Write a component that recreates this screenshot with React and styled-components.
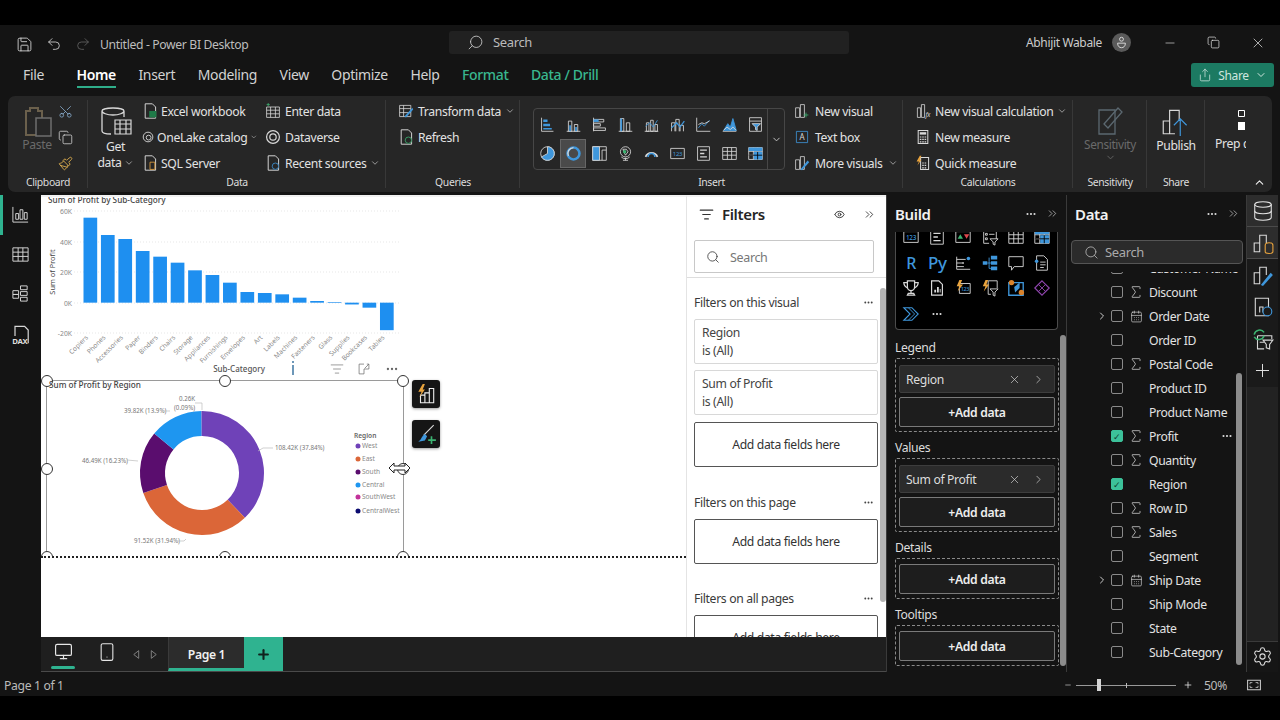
import React from "react";
import styled, { createGlobalStyle } from "styled-components";
import {
  Save, Undo2, Redo2, Search, Minus, X, Copy, Scissors, ChevronDown, ChevronUp, ChevronRight,
  ChevronsRight, Ellipsis, ListFilter, Eye, Sigma, CalendarDays, Plus, Settings, Database, Monitor,
  Smartphone, Share, Paintbrush,
} from "lucide-react";

const W = "#d8d8d8";
const B = "#3f97dc";
const O = "#e8a33d";
const FONT = `"Noto Sans", "Open Sans", sans-serif`;

const Global = createGlobalStyle`
  html, body { margin: 0; padding: 0; background: #000; overflow: hidden; }
  body { font-family: ${FONT}; }
  * { box-sizing: border-box; }
`;

/* shell */
const Screen = styled.div`
  width: 1280px;
  height: 720px;
  padding: 25px 0 24px;
  background: #000;
`;
const Frame = styled.div`
  height: 671px;
  display: flex;
  flex-direction: column;
  background: #141414;
  color: ${W};
  letter-spacing: -0.35px;
`;
const TitleBar = styled.div`
  height: 35px;
  flex: none;
  display: flex;
  align-items: center;
  padding: 3px 0 0 16px;
  position: relative;
`;
const TitleIcons = styled.div`
  display: flex;
  align-items: center;
  gap: 13px;
  width: 84px;
`;
const TitleText = styled.div`
  font-size: 12.2px;
  color: #bdbdbd;
  width: 349px;
  white-space: nowrap;
`;
const TopSearch = styled.div`
  width: 400px;
  height: 23px;
  display: flex;
  align-items: center;
  gap: 9px;
  padding-left: 18px;
  background: #212121;
  border-radius: 3px;
  font-size: 13px;
  color: #bbb;
  margin-top: -4px;
`;
const UserBox = styled.div`
  margin-left: 177px;
  width: 120px;
  display: flex;
  align-items: center;
  gap: 10px;
  font-size: 12px;
  color: #ccc;
  white-space: nowrap;
  margin-top: -4px;
`;
const Avatar = styled.div`
  width: 19px;
  height: 19px;
  border-radius: 50%;
  background: #5a5a5a;
  display: flex;
  align-items: center;
  justify-content: center;
  flex: none;
`;
const WindowButtons = styled.div`
  display: flex;
  align-items: center;
  gap: 30px;
  margin: -3px 0 0 17px;
`;
const MenuBar = styled.div`
  height: 36px;
  flex: none;
  display: flex;
  align-items: center;
  padding: 0 6px 7px 23px;
  gap: 22.5px;
`;
const MenuTab = styled.div`
  position: relative;
  font-size: 14px;
  font-weight: ${(p) => (p.$active ? 600 : p.$green ? 500 : 400)};
  color: ${(p) => (p.$green ? "#39b78f" : p.$active ? "#fff" : "#d2d2d2")};
  margin-right: ${(p) => p.$gapAfter || 0}px;
  white-space: nowrap;
  &::after {
    content: "";
    display: ${(p) => (p.$active ? "block" : "none")};
    position: absolute;
    left: 0;
    right: 0;
    bottom: -4px;
    height: 2px;
    background: #2fae8a;
  }
`;
const ShareButton = styled.div`
  margin-left: auto;
  width: 83px;
  height: 24px;
  display: flex;
  align-items: center;
  justify-content: center;
  gap: 6px;
  background: #1c7a62;
  border-radius: 3px;
  font-size: 12px;
  color: #cfe6df;
  margin-top: 1px;
`;

/* ribbon */
const Ribbon = styled.div`
  height: 96px;
  flex: none;
  margin: 0 8px 3px;
  display: flex;
  background: #262626;
  border-radius: 7px;
`;
const Group = styled.div`
  width: ${(p) => p.$w}px;
  flex: none;
  display: flex;
  flex-direction: column;
  padding-top: 2px;
  position: relative;
  &:not(:last-child)::after {
    content: "";
    position: absolute;
    right: 0;
    top: 4px;
    bottom: 4px;
    width: 1px;
    background: #383838;
  }
`;
const GroupBody = styled.div`
  height: 76px;
  display: flex;
  padding-left: ${(p) => p.$pad || 0}px;
  gap: ${(p) => p.$gap || 0}px;
`;
const GroupLabel = styled.div`
  font-size: 10.4px;
  text-align: center;
  color: #ddd;
  line-height: 14px;
  margin-top: 1px;
`;
const Column = styled.div`
  display: flex;
  flex-direction: column;
  width: ${(p) => (p.$w ? `${p.$w}px` : "auto")};
  flex: none;
`;
const Item = styled.div`
  height: 26px;
  flex: none;
  display: flex;
  align-items: center;
  gap: ${(p) => p.$gap || 3}px;
  font-size: 12.2px;
  color: #e2e2e2;
  white-space: nowrap;
`;
const BigButton = styled.div`
  width: ${(p) => p.$w || 40}px;
  flex: none;
  display: flex;
  flex-direction: column;
  align-items: center;
  padding-top: ${(p) => p.$top || 6}px;
  font-size: 12.2px;
  line-height: 16px;
  text-align: center;
  color: ${(p) => (p.$dim ? "#6a6a6a" : "#e2e2e2")};
  white-space: nowrap;
`;
const CaretLine = styled.span`
  display: flex;
  align-items: center;
  gap: 2px;
`;
const Gallery = styled.div`
  width: 252px;
  height: 62px;
  margin-top: 10px;
  flex: none;
  display: flex;
  border: 1px solid #474747;
  border-radius: 4px;
`;
const GalleryGrid = styled.div`
  width: 234px;
  display: grid;
  grid-template-columns: repeat(9, 26px);
  grid-auto-rows: 29px;
  padding-top: 1px;
  border-right: 1px solid #474747;
`;
const GalleryCell = styled.div`
  display: flex;
  align-items: center;
  justify-content: center;
  background: ${(p) => (p.$on ? "#4a4a4a" : "transparent")};
  border: 1px solid ${(p) => (p.$on ? "#666" : "transparent")};
`;
const GalleryMore = styled.div`
  flex: 1;
  display: flex;
  align-items: center;
  justify-content: center;
`;
const Collapse = styled.div`
  position: absolute;
  right: 6px;
  bottom: 3px;
  line-height: 0;
`;
const PrepClip = styled.div`
  width: 31px;
  overflow: hidden;
  margin-left: 10px;
  padding-top: 6px;
  font-size: 12.2px;
  line-height: 16px;
  color: #e2e2e2;
  white-space: nowrap;
  svg {
    display: block;
  }
`;

/* main */
const Main = styled.div`
  flex: 1;
  min-height: 0;
  display: flex;
`;
const LeftRail = styled.div`
  width: 41px;
  flex: none;
  display: flex;
  flex-direction: column;
  align-items: center;
`;
const RailButton = styled.div`
  width: 41px;
  height: ${(p) => p.$h || 39.5}px;
  display: flex;
  align-items: center;
  justify-content: center;
  color: #d0d0d0;
  border-left: 3px solid ${(p) => (p.$on ? "#2fb390" : "transparent")};
  padding-right: 3px;
`;
const Center = styled.div`
  width: 845px;
  flex: none;
  display: flex;
  flex-direction: column;
`;
const Workspace = styled.div`
  flex: 1;
  min-height: 0;
  display: flex;
  background: #fff;
`;
const CanvasArea = styled.div`
  width: 645px;
  flex: none;
  background: #fff;
  position: relative;
  overflow: hidden;
  border-top: 2px solid #f1f1f1;
`;
const PageSheet = styled.div`
  position: relative;
  height: 361px;
  overflow: hidden;
  border-bottom: 2px dotted #222;
`;
const ChartSvg = styled.svg`
  position: absolute;
  left: ${(p) => p.$x}px;
  top: ${(p) => p.$y}px;
  font-family: ${FONT};
  letter-spacing: 0;
`;
const VisualHeader = styled.div`
  position: absolute;
  left: 245px;
  top: 164px;
  width: 120px;
  height: 16px;
  display: flex;
  align-items: center;
  color: #666;
`;
const InfoMark = styled.div`
  width: 2px;
  height: 10px;
  background: #6d97b8;
  margin-right: 35px;
  position: relative;
  left: 6px;
  top: 1px;
  &::before {
    content: "";
    position: absolute;
    left: 0;
    top: -4px;
    width: 2px;
    height: 2px;
    background: #6d97b8;
  }
`;
const HeaderIcon = styled.div`
  width: 28px;
  display: flex;
  justify-content: center;
`;
const Selected = styled.div`
  position: absolute;
  left: 5px;
  top: 183px;
  width: 358px;
  height: 178px;
  border: 1.5px solid #9a9a9a;
`;
const Handle = styled.div`
  position: absolute;
  left: ${(p) => p.$x}%;
  top: ${(p) => p.$y}%;
  width: 12px;
  height: 12px;
  margin: -6px 0 0 -6px;
  border-radius: 50%;
  background: #fff;
  border: 1.5px solid #333;
`;
const FloatBar = styled.div`
  position: absolute;
  left: 371px;
  top: 183px;
  display: flex;
  flex-direction: column;
  gap: 12px;
`;
const FloatButton = styled.div`
  width: 28px;
  height: 28px;
  background: #151515;
  border-radius: 3px;
  display: flex;
  align-items: center;
  justify-content: center;
  box-shadow: 0 1px 3px rgba(0, 0, 0, 0.4);
`;

/* filters */
const FiltersPane = styled.div`
  width: 200px;
  flex: none;
  position: relative;
  overflow: hidden;
  background: #fff;
  border-left: 1px solid #e4e4e4;
  border-top: 2px solid #f1f1f1;
  color: #333;
`;
const FiltersHead = styled.div`
  height: 34px;
  display: flex;
  align-items: center;
  padding: 0 10px 0 12px;
  gap: 8px;
  font-size: 15px;
  font-weight: 600;
  color: #252525;
`;
const FiltersSearch = styled.div`
  margin: 9px 12px 0 7px;
  height: 33px;
  border: 1px solid #c8c8c8;
  border-radius: 2px;
  display: flex;
  align-items: center;
  gap: 10px;
  padding: 1px 0 0 11px;
  font-size: 12.5px;
  color: #777;
`;
const Rule = styled.div`
  height: 1px;
  margin-top: 4px;
  background: #dedede;
`;
const FilterSection = styled.div`
  padding: 0 8px 0 7px;
  margin-top: ${(p) => p.$top}px;
`;
const FilterTitle = styled.div`
  display: flex;
  justify-content: space-between;
  align-items: center;
  height: 18px;
  font-size: 12.2px;
  color: #3a3a3a;
  padding-right: 4px;
  margin-bottom: 8px;
`;
const FilterCard = styled.div`
  height: 45px;
  border: 1px solid #d8d8d8;
  border-radius: 2px;
  padding: 4px 7px;
  font-size: 12.2px;
  line-height: 18px;
  color: #444;
  margin-bottom: 6px;
`;
const AddBox = styled.div`
  height: 45px;
  border: 1px solid #555;
  border-radius: 2px;
  display: flex;
  align-items: center;
  justify-content: center;
  font-size: 12.2px;
  color: #333;
  ${FilterCard} + & {
    margin-top: 7px;
  }
`;
const PaneScroll = styled.div`
  position: absolute;
  right: 0;
  top: 91px;
  width: 6px;
  height: 314px;
  border-radius: 3px;
  background: #b4b4b4;
`;

/* tab strip */
const TabStrip = styled.div`
  height: 35px;
  flex: none;
  display: flex;
  background: #1f1f1f;
  border-bottom: 1px solid #4a4a4a;
`;
const ViewButton = styled.div`
  width: 44px;
  display: flex;
  justify-content: center;
  padding-top: 5px;
  position: relative;
  color: #e6e6e6;
  &::after {
    content: "";
    display: ${(p) => (p.$on ? "block" : "none")};
    position: absolute;
    left: 10px;
    right: 10px;
    top: 29px;
    height: 3px;
    border-radius: 2px;
    background: #2fb390;
  }
`;
const PagerArrows = styled.div`
  width: 35px;
  display: flex;
  align-items: center;
  justify-content: space-between;
  padding: 0 5px 0 2px;
`;
const PageTab = styled.div`
  margin-left: 4px;
  width: 76px;
  display: flex;
  align-items: center;
  justify-content: center;
  background: #2c2c2c;
  border-bottom: 3px solid #2fb390;
  font-size: 12.2px;
  font-weight: 600;
  color: #f0f0f0;
  padding-top: 3px;
  border-left: 1px solid #3a3a3a;
`;
const AddTab = styled.div`
  width: 39px;
  display: flex;
  align-items: center;
  justify-content: center;
  background: #2fb390;
`;

/* build + data */
const DarkPane = styled.div`
  width: ${(p) => p.$w}px;
  flex: none;
  position: relative;
  overflow: hidden;
  border-left: 1px solid #3a3a3a;
  background: #141414;
`;
const PaneHead = styled.div`
  height: 37px;
  display: flex;
  align-items: center;
  padding: 0 ${(p) => p.$right}px 0 8px;
  font-size: 15px;
  font-weight: 600;
  color: #f2f2f2;
`;
const PaneActions = styled.div`
  margin-left: auto;
  display: flex;
  align-items: center;
  gap: ${(p) => p.$gap || 9}px;
`;
const VizBox = styled.div`
  margin: 0 8px;
  width: 163px;
  height: 98px;
  background: #000;
  border: 1px solid #4c4c4c;
  border-top: 0;
  border-radius: 0 0 4px 4px;
  overflow: hidden;
  display: grid;
  grid-template-columns: repeat(6, 26.2px);
  grid-auto-rows: 25.7px;
  padding: 0 0 0 2px;
  align-content: start;
`;
const VizCell = styled.div`
  display: flex;
  align-items: center;
  justify-content: center;
  font-size: ${(p) => p.$size || 15}px;
  font-weight: 500;
  color: ${B};
  margin-top: -8px;
  height: 26px;
`;
const WellTitle = styled.div`
  font-size: 12.2px;
  line-height: 16px;
  color: #ddd;
  margin: ${(p) => p.$top}px 0 2px 8px;
`;
const Well = styled.div`
  margin: 0 8px;
  width: 164px;
  border: 1px dashed #8a8a8a;
  border-radius: 2px;
  padding: ${(p) => (p.$filled ? 6 : 5)}px 3px 4px;
  display: flex;
  flex-direction: column;
  gap: 4px;
`;
const FieldPill = styled.div`
  height: 28px;
  display: flex;
  align-items: center;
  background: #2b2b2b;
  border: 1px solid #3d3d3d;
  border-radius: 2px;
  padding-left: 6px;
  font-size: 12.2px;
  color: #ddd;
`;
const PillActions = styled.div`
  margin-left: auto;
  display: flex;
  align-items: center;
  height: 100%;
  gap: 11px;
  padding-right: 9px;
  line-height: 0;
`;
const AddData = styled.div`
  height: 30px;
  border: 1px solid #7a7a7a;
  border-radius: 2px;
  background: #1d1d1d;
  display: flex;
  align-items: center;
  justify-content: center;
  font-size: 12.2px;
  font-weight: 600;
  color: #eee;
`;
const DarkScroll = styled.div`
  position: absolute;
  right: ${(p) => p.$r}px;
  top: ${(p) => p.$t}px;
  width: 6px;
  height: ${(p) => p.$h}px;
  border-radius: 3px;
  background: #8c8c8c;
`;
const DataSearch = styled.div`
  margin: 8px 0 0 4px;
  width: 172px;
  height: 24px;
  display: flex;
  align-items: center;
  gap: 6px;
  padding-left: 12px;
  background: #2b2b2b;
  border: 1px solid #555;
  border-radius: 4px;
  font-size: 13px;
  color: #aaa;
`;
const FieldList = styled.div`
  height: 392px;
  margin-top: 8px;
  overflow: hidden;
`;
const FieldRows = styled.div`
  margin-top: -16px;
`;
const FieldRow = styled.div`
  height: 24px;
  display: flex;
  align-items: center;
  padding-left: 29px;
  font-size: 12.2px;
  color: #e2e2e2;
  white-space: nowrap;
`;
const Expander = styled.div`
  width: 15px;
  line-height: 0;
`;
const Check = styled.div`
  width: 12px;
  height: 12px;
  flex: none;
  border-radius: 2px;
  border: 1px solid ${(p) => (p.$on ? "#3cc19a" : "#8a8a8a")};
  background: ${(p) => (p.$on ? "#3cc19a" : "transparent")};
  display: flex;
  align-items: center;
  justify-content: center;
  color: #0f3f33;
  font-size: 9px;
  line-height: 1;
`;
const TypeIcon = styled.div`
  width: 26px;
  flex: none;
  display: flex;
  justify-content: center;
  line-height: 0;
`;
const RowDots = styled.div`
  margin-left: auto;
  padding-right: 13px;
  line-height: 0;
`;
const RightRail = styled.div`
  width: 32px;
  flex: none;
  display: flex;
  flex-direction: column;
  background: #222;
  border-left: 1px solid #3a3a3a;
`;
const RightButton = styled.div`
  height: 32px;
  display: flex;
  align-items: center;
  justify-content: center;
  color: #e6e6e6;
  background: ${(p) => (p.$on ? "#2d2d2d" : "#1a1a1a")};
  border-bottom: 1px solid ${(p) => (p.$on ? "#4a4a4a" : "transparent")};
`;
const RailGear = styled.div`
  margin-top: auto;
  height: 31px;
  padding-bottom: 2px;
  display: flex;
  align-items: center;
  justify-content: center;
  color: #ddd;
  border-top: 1px solid #3a3a3a;
  background: #161616;
`;

/* status */
const StatusBar = styled.div`
  height: 24px;
  flex: none;
  display: flex;
  align-items: center;
  padding: 2px 18px 0 4px;
  font-size: 12.2px;
  color: #bbb;
`;
const ZoomBox = styled.div`
  margin-left: auto;
  display: flex;
  align-items: center;
  gap: 6px;
`;
const ZoomTrack = styled.div`
  width: 100px;
  height: 1px;
  background: #999;
  position: relative;
  margin: 0 1px 0 -2px;
`;
const ZoomThumb = styled.div`
  position: absolute;
  left: ${(p) => p.$at}px;
  top: ${(p) => (p.$tick ? -2 : -6)}px;
  width: ${(p) => (p.$tick ? 1 : 4)}px;
  height: ${(p) => (p.$tick ? 5 : 12)}px;
  background: ${(p) => (p.$tick ? "#bbb" : "#d5d5d5")};
`;
const ZoomValue = styled.span`
  margin-left: 5px;
  width: 36px;
`;

/* hand drawn icons */
const Ico = ({ s = 18, v = 20, children, ...rest }) => (
  <svg width={s} height={s} viewBox={`0 0 ${v} ${v}`} fill="none" stroke={W} strokeWidth="1" {...rest}>
    {children}
  </svg>
);

const glyph = {
  stackBar: <><path d="M3 2v16h14" /><path d="M5 4h5v3H5zM5 9h8v3H5zM5 14h10v2H5z" fill={B} stroke="none" /></>,
  cluster: <><path d="M2 18h16" /><path d="M4 6h4v12H4zM11 10h4v8h-4z" /><path d="M5 11h2v7H5zM12 13h2v5h-2z" fill={B} stroke="none" /></>,
  hbar: <><path d="M3 2v16" /><path d="M3 4h12v3H3zM3 9h8v3H3zM3 14h14v3H3z" /><path d="M3 4h6v3H3z" fill={B} stroke="none" /></>,
  column: <><path d="M2 18h16" /><path d="M4 3h4v15H4zM11 8h4v10h-4z" /><path d="M4 3h2v15H4z" fill={B} stroke="none" /></>,
  combo: <><path d="M2 18h16M4 8h3v10H4zM9 5h3v13H9zM14 10h3v8h-3z" /><path d="M3 12l5-4 4 5 5-8" stroke={B} /></>,
  ribbon: <><path d="M3 18V8h4v10M8 18V4h4v14M13 18v-7h4v7" /><path d="M3 14l6-6 4 5 5-7" stroke={B} strokeWidth="1.5" /></>,
  line: <><path d="M2 2v16h16" /><path d="M4 14l4-5 3 3 6-7" stroke={B} /><path d="M4 10l4-2 3 1 6-3" /></>,
  area: <><path d="M2 18h16" /><path d="M3 17l5-8 3 4 3-10 4 14z" fill={B} stroke={B} /><path d="M3 17l4-4 4 3 3-3 4 4" stroke={W} /></>,
  funnel: <><path d="M3 2h14v16H3z" /><path d="M3 6h14" stroke={W} /><path d="M6 9h10l-4 4v4l-2-1v-3z" fill={B} stroke={W} /></>,
  pie: <><circle cx="10" cy="10" r="8" fill="none" /><path d="M10 2a8 8 0 1 1-7 12l7-4z" fill={B} stroke={W} /></>,
  donut: <><circle cx="10" cy="10" r="7" stroke={B} strokeWidth="3" /><path d="M10 3a7 7 0 0 0-6 10" stroke={W} strokeWidth="1.5" /></>,
  tree: <><path d="M2 2h16v16H2z" /><path d="M2 2h8v16H2z" fill={B} stroke={W} /><path d="M13 6h5M13 6v12" /></>,
  globe: <><circle cx="10" cy="8" r="6" /><path d="M7 5h4l2 3-3 4-2-4zM5 14a7 7 0 0 0 10 0M10 15v3M7 18h6" stroke={W} /><circle cx="9" cy="8" r="2" fill="#3cb371" stroke="none" /></>,
  gauge: <><path d="M3 14a7.5 7.5 0 0 1 14 0" stroke={W} strokeWidth="2" /><path d="M6 14a4 4 0 0 1 8 0" stroke={B} strokeWidth="2" /></>,
  card: <><path d="M2 4h16v12H2z" /><text x="10" y="13" fontSize="7" textAnchor="middle" fill={B} stroke="none">123</text></>,
  multi: <><path d="M3 2h14v16H3z" /><path d="M6 6h8M6 10h5M6 14h8" stroke={W} strokeWidth="1.5" /></>,
  table: <><path d="M2 3h16v14H2zM2 7.5h16M2 12h16M7.5 3v14M12.5 3v14" /></>,
  matrix: <><path d="M2 3h16v14H2zM2 7.5h16M2 12h16M7.5 3v14M12.5 3v14" /><path d="M8 8h10v9H8zM2 3h16v4H2z" fill={B} stroke="none" /><path d="M2 12h16M12.5 8v9" stroke="#000" /></>,
  kpi: <><path d="M2 4h16v12H2z" /><path d="M4 12l3-5 3 5z" fill="#3cb371" stroke="none" /><path d="M11 7h6l-3 5z" fill="#e0484d" stroke="none" /></>,
  slicer: <><path d="M3 3h14v9M3 3v14h6M5 6h2v2H5zM5 11h2v2H5zM9 7h6" /><path d="M10 12h9l-3.5 3.5V19l-2-1v-2.5z" /></>,
  decomp: <><path d="M3 3v14h15M3 6h10M3 10h6M3 14h8" /><circle cx="16" cy="5" r="2" fill={B} stroke="none" /><circle cx="10" cy="10" r="1" fill={W} stroke="none" /></>,
  keyinf: <><path d="M2 8h5v4H2zM11 2h7v4h-7zM11 8h7v4h-7zM11 14h7v4h-7z" fill={B} stroke="none" /><path d="M7 10h4M9 4v12h2" stroke={B} /></>,
  comment: <><path d="M2 3h16v11H8l-3 4v-4H2z" /></>,
  narrative: <><path d="M4 2h8l4 4v12H4z" /><circle cx="4" cy="8" r="2" fill={B} stroke="none" /><path d="M8 9h6M8 12h6M8 15h4" /></>,
  trophy: <><path d="M6 2h8v7a4 4 0 0 1-8 0zM6 4H2c0 4 2 5 4 6M14 4h4c0 4-2 5-4 6M10 13v3M6 18h8l-1-2H7z" strokeWidth="1.4" /></>,
  paginated: <><path d="M4 2h8l4 4v12H4z" strokeWidth="1.3" /><path d="M7 15v-3h2v3zM10 15V9h2v6zM13 15v-4h1v4z" fill={W} stroke="none" /></>,
  quickCard: <><path d="M6 5h12v11H6z" /><text x="12" y="13" fontSize="6" textAnchor="middle" fill={B} stroke="none">123</text><path d="M6 1L3 8h3l-2 6 6-8H7l2-5z" fill={O} stroke="none" /></>,
  quickSlicer: <><path d="M8 2h10v8M8 2v15h3" /><path d="M10 11h9l-3.5 3.5V19l-2-1v-3.5z" /><path d="M5 1L2 8h3l-2 6 6-8H6l2-5z" fill={O} stroke="none" /></>,
  azureMap: <><path d="M2 4h16v14H2z" stroke={B} strokeWidth="1.5" /><path d="M8 9l6-5v6l-5 5z" fill={B} stroke="none" /><circle cx="5" cy="4" r="3" fill="#d9822b" stroke="none" /><circle cx="16" cy="15" r="3" fill="#d9822b" stroke="none" /></>,
  powerApps: <><path d="M10 2l8 8-8 8-8-8z" stroke="#8e44ad" strokeWidth="1.3" /><path d="M6 6l8 8M14 6l-8 8" stroke="#8e44ad" /></>,
  automate: <><path d="M2 3h9l7 7-7 7H2l7-7z" stroke={B} strokeWidth="1.2" /><path d="M7 3l7 7-7 7" stroke={B} /></>,
};
const G = ({ n, s = 18 }) => <Ico s={s}>{glyph[n]}</Ico>;

const galleryIcons = ["stackBar", "cluster", "hbar", "column", "combo", "ribbon", "line", "area", "funnel", "pie", "donut", "tree", "globe", "gauge", "card", "multi", "table", "matrix"];
const vizRows = ["card", "multi", "kpi", "slicer", "table", "matrix", "R", "Py", "decomp", "keyinf", "comment", "narrative", "trophy", "paginated", "quickCard", "quickSlicer", "azureMap", "powerApps", "automate", "dots"];

const bars = [68, 120, 132, 168, 185, 203, 226, 240, 263, 291, 294, 298, 308, 318, 321];
const cats = ["Copiers", "Phones", "Accessories", "Paper", "Binders", "Chairs", "Storage", "Appliances", "Furnishings", "Envelopes", "Art", "Labels", "Machines", "Fasteners", "Glass", "Supplies", "Bookcases", "Tables"];

const BarChart = () => {
  const zero = 195 + 323 / 3;
  const bar = (i) => 83.5 + i * 17.44;
  return (
    <ChartSvg $x={0} $y={-2} width="363" height="185" viewBox="41 195 363 185">
      <text x="48" y="202.5" fontSize="8.2" fontWeight="500" fill="#444">Sum of Profit by Sub-Category</text>
      {[[211, "60K"], [242, "40K"], [272, "20K"], [303, "0K"], [333, "-20K"]].map(([y, t]) => (
        <g key={t}>
          <line x1="74" x2="400" y1={y} y2={y} stroke="#ddd" strokeWidth="0.7" strokeDasharray="1 2" />
          <text x="72" y={y + 2.5} fontSize="6.8" textAnchor="end" fill="#888">{t}</text>
        </g>
      ))}
      <text transform="translate(54.5 272) rotate(-90)" fontSize="7.4" textAnchor="middle" fill="#444">Sum of Profit</text>
      {bars.map((t, i) => (
        <rect key={i} x={bar(i)} y={195 + t / 3} width="13.7" height={zero - 195 - t / 3} fill="#1e8ff0" />
      ))}
      <rect x={bar(15)} y={zero} width="13.7" height="1.8" fill="#1e8ff0" />
      <rect x={bar(16)} y={zero} width="13.7" height="5" fill="#1e8ff0" />
      <rect x={bar(17)} y={zero} width="13.7" height="27.5" fill="#1e8ff0" />
      {cats.map((c, i) => (
        <text key={c} transform={`translate(${bar(i) + 5} 338) rotate(-45)`} fontSize="6.6" textAnchor="end" fill="#8a8a8a">{c}</text>
      ))}
      <text x="239" y="372" fontSize="8" fontWeight="500" textAnchor="middle" fill="#555">Sub-Category</text>
    </ChartSvg>
  );
};

const arc = (cx, cy, ro, ri, a0, a1) => {
  const p = (r, a) => `${(cx + r * Math.sin(a)).toFixed(2)} ${(cy - r * Math.cos(a)).toFixed(2)}`;
  const large = a1 - a0 > Math.PI ? 1 : 0;
  return `M${p(ro, a0)}A${ro} ${ro} 0 ${large} 1 ${p(ro, a1)}L${p(ri, a1)}A${ri} ${ri} 0 ${large} 0 ${p(ri, a0)}Z`;
};
const slices = [[37.84, "#6f42b8"], [31.94, "#db6638"], [16.23, "#5a0d6e"], [13.9, "#1e96f0"], [0.09, "#c2329a"]];
const legend = [["West", "#6f42b8", 446], ["East", "#db6638", 459], ["South", "#5a0d6e", 472], ["Central", "#1e96f0", 485], ["SouthWest", "#c2329a", 497], ["CentralWest", "#0b0b70", 511]];
const labels = [
  ["108.42K (37.84%)", 275, 450, "M258 451l5-3h10"],
  ["91.52K (31.94%)", 134, 543, "M178 541h6l2-2"],
  ["46.49K (16.23%)", 82, 463, "M127 460l11 1"],
  ["39.82K (13.9%)", 124, 413, "M164 411h6"],
  ["0.26K", 179, 401, "M202 410v-7h-7"],
  ["(0.09%)", 174, 410, ""],
];

const Donut = () => {
  let acc = 0;
  return (
    <ChartSvg $x={5} $y={183} width="358" height="178" viewBox="46 380 358 178">
      <text x="49" y="388" fontSize="8.2" fontWeight="500" fill="#444">Sum of Profit by Region</text>
      {slices.map(([v, c]) => {
        const a0 = (acc / 100) * Math.PI * 2;
        acc += v;
        return <path key={c} d={arc(202, 473, 62, 37, a0, (acc / 100) * Math.PI * 2)} fill={c} />;
      })}
      {labels.map(([t, x, y, d]) => (
        <g key={t}>
          <text x={x} y={y} fontSize="6.2" fill="#777">{t}</text>
          {d && <path d={d} stroke="#bbb" strokeWidth="0.7" fill="none" />}
        </g>
      ))}
      <text x="354" y="438" fontSize="6.6" fontWeight="600" fill="#666">Region</text>
      {legend.map(([t, c, y]) => (
        <g key={t}>
          <circle cx="358" cy={y} r="2.5" fill={c} />
          <text x="362" y={y + 2.2} fontSize="6.6" fill="#888">{t}</text>
        </g>
      ))}
    </ChartSvg>
  );
};

const ResizeCursor = () => (
  <ChartSvg $x={347} $y={264} width="24" height="14" viewBox="0 0 24 14">
    <path d="M1 7l5-5v3h11V2l5 5-5 5V9H6v3z" fill="#fff" stroke="#222" strokeWidth="1" />
  </ChartSvg>
);

const fields = [
  { n: "Customer Name" },
  { n: "Discount", t: "sum" },
  { n: "Order Date", t: "date", x: true },
  { n: "Order ID" },
  { n: "Postal Code", t: "sum" },
  { n: "Product ID" },
  { n: "Product Name" },
  { n: "Profit", t: "sum", on: true, dots: true },
  { n: "Quantity", t: "sum" },
  { n: "Region", on: true },
  { n: "Row ID", t: "sum" },
  { n: "Sales", t: "sum" },
  { n: "Segment" },
  { n: "Ship Date", t: "date", x: true },
  { n: "Ship Mode" },
  { n: "State" },
  { n: "Sub-Category" },
];

const Dots = ({ c = "#ddd", s = 12 }) => <Ellipsis size={s} color={c} strokeWidth={2.2} />;
const Pair = ({ c = "#cfcfcf" }) => <ChevronsRight size={13} color={c} strokeWidth={1.3} />;
const Caret = () => <ChevronDown size={10} strokeWidth={1.5} color="#ddd" />;

const Field = ({ title, top, value }) => (
  <>
    <WellTitle $top={top}>{title}</WellTitle>
    <Well $filled={!!value}>
      {value && (
        <FieldPill>
          {value}
          <PillActions>
            <X size={13} strokeWidth={1.2} color="#ddd" />
            <ChevronRight size={13} strokeWidth={1.2} color="#ddd" />
          </PillActions>
        </FieldPill>
      )}
      <AddData>+Add data</AddData>
    </Well>
  </>
);

const App = () => (
  <Screen>
    <Global />
    <Frame>
      <TitleBar>
        <TitleIcons>
          <Save size={17} strokeWidth={1.2} color="#ddd" />
          <Undo2 size={16} strokeWidth={1.2} color="#ddd" />
          <Redo2 size={16} strokeWidth={1.2} color="#666" />
        </TitleIcons>
        <TitleText>Untitled - Power BI Desktop</TitleText>
        <TopSearch>
          <Search size={17} strokeWidth={1.2} color="#ccc" style={{ transform: "scaleX(-1)" }} />
          Search
        </TopSearch>
        <UserBox>
          Abhijit Wabale
          <Avatar>
            <Ico s={13}>
              <circle cx="10" cy="5" r="3" strokeWidth="1.5" />
              <path d="M4 11h12c0 5-3 7-6 7s-6-2-6-7z" strokeWidth="1.5" />
            </Ico>
          </Avatar>
        </UserBox>
        <WindowButtons>
          <Minus size={14} strokeWidth={1.1} color="#e4e4e4" />
          <Copy size={13} strokeWidth={1.3} color="#e4e4e4" />
          <X size={16} strokeWidth={1.1} color="#e4e4e4" />
        </WindowButtons>
      </TitleBar>

      <MenuBar>
        <MenuTab $gapAfter={10}>File</MenuTab>
        <MenuTab $active>Home</MenuTab>
        <MenuTab>Insert</MenuTab>
        <MenuTab>Modeling</MenuTab>
        <MenuTab>View</MenuTab>
        <MenuTab>Optimize</MenuTab>
        <MenuTab>Help</MenuTab>
        <MenuTab $green>Format</MenuTab>
        <MenuTab $green>Data / Drill</MenuTab>
        <ShareButton>
          <Share size={14} strokeWidth={1.3} color="#cfe6df" />
          Share
          <ChevronDown size={12} color="#cfe6df" />
        </ShareButton>
      </MenuBar>

      <Ribbon>
        <Group $w={80}>
          <GroupBody $pad={14} $gap={6}>
            <BigButton $w={30} $dim $top={7}>
              <Ico s={32} v={32}>
                <path d="M5 6h4V3h8v3h4v24H5z" stroke="#6b604c" strokeWidth="2" />
                <path d="M15 13h15v18H15z" fill="#262626" stroke="#6e6e6e" strokeWidth="1.5" />
              </Ico>
              <span>Paste</span>
            </BigButton>
            <Column>
              <Item><Scissors size={15} strokeWidth={1.2} color="#8fb6d8" style={{ transform: "rotate(-90deg)" }} /></Item>
              <Item><Copy size={15} strokeWidth={1.2} color="#ddd" /></Item>
              <Item><Paintbrush size={15} strokeWidth={1.4} color="#e0b050" /></Item>
            </Column>
          </GroupBody>
          <GroupLabel>Clipboard</GroupLabel>
        </Group>

        <Group $w={298}>
          <GroupBody $pad={8} $gap={7}>
            <BigButton $w={39} $top={7}>
              <Ico s={34} v={34}>
                <path d="M3 6v20c0 2 4 3 9 3M25 12V6M3 6c0 2 5 4 11 4s11-2 11-4-5-3-11-3S3 4 3 6z" strokeWidth="1.3" />
                <path d="M16 15h16v14H16zM16 19h16M16 24h16M21 15v14M27 15v14" strokeWidth="1.2" />
              </Ico>
              <span>Get</span>
              <CaretLine>data <Caret /></CaretLine>
            </BigButton>
            <Column $w={116}>
              <Item><Ico s={16}><path d="M4 1h9l4 4v14H4z" strokeWidth="1.2" /><path d="M9 10h9v8H9z" fill="#1f7a48" stroke="none" /></Ico>Excel workbook</Item>
              <Item><Ico s={16}><circle cx="10" cy="10" r="8" strokeWidth="1.5" /><circle cx="11" cy="11" r="4" strokeWidth="1.5" /></Ico>OneLake catalog <Caret /></Item>
              <Item><Ico s={16}><path d="M4 1h9l4 4v14H4z" strokeWidth="1.2" /><path d="M10 9h6v9h-6z" stroke={O} /></Ico>SQL Server</Item>
            </Column>
            <Column>
              <Item $gap={4}><Ico s={16}><path d="M2 5h16v13H2zM2 9h16M2 13.5h16M7 5v13M13 5v13" /><path d="M4 0v4M2 2h4" stroke="#3cb371" /></Ico>Enter data</Item>
              <Item $gap={4}><Ico s={16}><circle cx="10" cy="10" r="8" strokeWidth="1.5" /><circle cx="10" cy="10" r="4" strokeWidth="1.5" /></Ico>Dataverse</Item>
              <Item $gap={4}><Ico s={16}><path d="M4 1h9l4 4v14H4z" strokeWidth="1.2" /><circle cx="13" cy="14" r="4" stroke={B} fill="#262626" /></Ico>Recent sources <Caret /></Item>
            </Column>
          </GroupBody>
          <GroupLabel>Data</GroupLabel>
        </Group>

        <Group $w={134}>
          <GroupBody $pad={12}>
            <Column>
              <Item $gap={4}><Ico s={16}><path d="M2 3h14v14H2zM2 7h14M2 12h14M7 3v14" /><path d="M8 17L18 6l1 2-9 10z" fill={B} stroke="none" /></Ico>Transform data <Caret /></Item>
              <Item $gap={4}><Ico s={16}><path d="M4 1h9l4 4v14H4z" strokeWidth="1.2" /><circle cx="13" cy="14" r="4" stroke="#3cb371" fill="#262626" /></Ico>Refresh</Item>
            </Column>
          </GroupBody>
          <GroupLabel>Queries</GroupLabel>
        </Group>

        <Group $w={383}>
          <GroupBody $pad={13} $gap={9}>
            <Gallery>
              <GalleryGrid>
                {galleryIcons.map((n) => (
                  <GalleryCell key={n} $on={n === "donut"}><G n={n} s={17} /></GalleryCell>
                ))}
              </GalleryGrid>
              <GalleryMore><ChevronDown size={11} color="#ccc" /></GalleryMore>
            </Gallery>
            <Column>
              <Item $gap={5}><Ico s={16}><path d="M2 6h5v12H2zM8 2h5v16H8z" /><path d="M15 12v6M12 15h6" stroke="#3cb371" /></Ico>New visual</Item>
              <Item $gap={5}><Ico s={16}><path d="M3 3h14v14H3z" stroke={B} /><text x="10" y="14" fontSize="10" textAnchor="middle" fill={W} stroke="none">A</text></Ico>Text box</Item>
              <Item $gap={5}><Ico s={16}><path d="M2 6h5v12H2zM8 2h5v16H8z" /><path d="M8 18l9-11 2 2-9 10z" fill={B} stroke="none" /></Ico>More visuals <Caret /></Item>
            </Column>
          </GroupBody>
          <GroupLabel>Insert</GroupLabel>
        </Group>

        <Group $w={170}>
          <GroupBody $pad={12}>
            <Column>
              <Item $gap={4}><Ico s={16}><path d="M3 6h4v12H3zM8 2h4v16H8z" /><text x="16" y="18" fontSize="8" fontStyle="italic" textAnchor="middle" fill={W} stroke="none">fx</text></Ico>New visual calculation <Caret /></Item>
              <Item $gap={4}><Ico s={16}><path d="M4 2h12v16H4z" strokeWidth="1.3" /><path d="M6 4h8v3H6z" fill={W} stroke="none" /><path d="M6 10h8M6 13h8M6 16h8" strokeDasharray="2 1" strokeWidth="1.5" /></Ico>New measure</Item>
              <Item $gap={4}><Ico s={16}><path d="M7 3h10v15H7z" strokeWidth="1.3" /><path d="M9 10h6M9 13h6M9 16h6" strokeDasharray="2 1" strokeWidth="1.5" /><path d="M6 1L2 8h3L3 13l5-7H6l2-5z" fill={O} stroke="none" /></Ico>Quick measure</Item>
            </Column>
          </GroupBody>
          <GroupLabel>Calculations</GroupLabel>
        </Group>

        <Group $w={74}>
          <GroupBody>
            <BigButton $w={74} $dim $top={6}>
              <Ico s={32} v={32} stroke="#5b6870" strokeWidth="1.3">
                <path d="M5 6h16v24H5z" />
                <path d="M10 20L24 4l4 4-14 16z" />
              </Ico>
              <span style={{ fontSize: 11.8 }}>Sensitivity</span>
              <ChevronDown size={11} color="#666" />
            </BigButton>
          </GroupBody>
          <GroupLabel>Sensitivity</GroupLabel>
        </Group>

        <Group $w={58}>
          <GroupBody>
            <BigButton $w={58} $top={6}>
              <Ico s={34} v={32} strokeWidth="1.1">
                <path d="M4 16h6v12H4zM10 28V6h9v10M10 28h5" />
                <path d="M20 30V14M14 20l6-6 6 6" stroke={B} />
              </Ico>
              <span>Publish</span>
            </BigButton>
          </GroupBody>
          <GroupLabel>Share</GroupLabel>
        </Group>

        <Group $w={67}>
          <GroupBody>
            <PrepClip>
              <Ico s={32} v={32}>
                <path d="M23.5 6.5h6v6h-6z" stroke="#fff" />
                <path d="M23 18h7v8h-7z" fill="#fff" stroke="none" />
              </Ico>
              <div>Prep data</div>
            </PrepClip>
          </GroupBody>
          <Collapse><ChevronUp size={13} color="#eee" /></Collapse>
        </Group>
      </Ribbon>

      <Main>
        <LeftRail>
          <RailButton $on>
            <Ico s={19}><path d="M2 2v16h16M5 15V9h3v6zM9.5 15V5h3v10zM14 15V8h3v7z" /></Ico>
          </RailButton>
          <RailButton><Ico s={19}><path d="M2 3h16v14H2zM2 7.5h16M2 12h16M7.5 3v14M12.5 3v14" /></Ico></RailButton>
          <RailButton><Ico s={19}><path d="M2 7h6v4H2zM2 11h6v4H2zM10 2h7v4h-7zM10 8h7v4h-7zM10 14h7v4h-7z" /></Ico></RailButton>
          <RailButton $h={44}>
            <Ico s={24}>
              <path d="M5 10V2h8l3 3v11" />
              <text x="9" y="17" fontSize="6.5" fontWeight="700" textAnchor="middle" fill="#ddd" stroke="none">DAX</text>
            </Ico>
          </RailButton>
        </LeftRail>

        <Center>
          <Workspace>
            <CanvasArea>
              <PageSheet>
                <BarChart />
                <Selected>
                  {[[0, 0], [50, 0], [100, 0], [0, 50], [100, 50], [0, 100], [50, 100], [100, 100]].map(([x, y]) => (
                    <Handle key={`${x}-${y}`} $x={x} $y={y} />
                  ))}
                </Selected>
                <Donut />
                <VisualHeader>
                  <InfoMark />
                  <HeaderIcon><ListFilter size={14} strokeWidth={1.1} /></HeaderIcon>
                  <HeaderIcon><Ico s={14} stroke="#666"><path d="M10 3H3v14h7v-7H17V3h-3M11 9l6-6" /></Ico></HeaderIcon>
                  <HeaderIcon><Ellipsis size={14} /></HeaderIcon>
                </VisualHeader>
                <ResizeCursor />
                <FloatBar>
                  <FloatButton>
                    <Ico s={22}><path d="M9 9h4v9H9zM13 5h4v13h-4zM5 11h4v7H5z" stroke="#eee" /><path d="M7 1L3 8h3L4 13l5-7H7l2-5z" fill={O} stroke="none" /></Ico>
                  </FloatButton>
                  <FloatButton>
                    <Ico s={22}><path d="M17 2L8 11" stroke="#ddd" /><path d="M9 10l2 2-2 4-6 1c3-2 3-5 6-7z" fill={B} stroke="none" /><path d="M15 12v7M12 15.5h7" stroke="#3cb371" strokeWidth="1.5" /></Ico>
                  </FloatButton>
                </FloatBar>
              </PageSheet>
            </CanvasArea>

            <FiltersPane>
              <FiltersHead>
                <ListFilter size={15} strokeWidth={1.8} color="#333" />
                Filters
                <PaneActions $gap={18}>
                  <Eye size={11} strokeWidth={2} color="#333" />
                  <ChevronsRight size={13} strokeWidth={1.6} color="#333" />
                </PaneActions>
              </FiltersHead>
              <FiltersSearch>
                <Search size={14} strokeWidth={1.5} color="#444" />
                Search
              </FiltersSearch>
              <Rule />
              <FilterSection $top={15}>
                <FilterTitle>Filters on this visual <Dots c="#444" s={11} /></FilterTitle>
                <FilterCard>Region<br />is (All)</FilterCard>
                <FilterCard>Sum of Profit<br />is (All)</FilterCard>
                <AddBox>Add data fields here</AddBox>
              </FilterSection>
              <FilterSection $top={26}>
                <FilterTitle>Filters on this page <Dots c="#444" s={11} /></FilterTitle>
                <AddBox>Add data fields here</AddBox>
              </FilterSection>
              <FilterSection $top={25}>
                <FilterTitle>Filters on all pages <Dots c="#444" s={11} /></FilterTitle>
                <AddBox>Add data fields here</AddBox>
              </FilterSection>
              <PaneScroll />
            </FiltersPane>
          </Workspace>

          <TabStrip>
            <ViewButton $on><Monitor size={19} strokeWidth={1.5} /></ViewButton>
            <ViewButton><Smartphone size={20} strokeWidth={1.3} /></ViewButton>
            <PagerArrows>
              <Ico s={11} stroke="#8a8a8a" strokeWidth="1.6"><path d="M14 3L5 10l9 7z" /></Ico>
              <Ico s={11} stroke="#8a8a8a" strokeWidth="1.6"><path d="M6 3l9 7-9 7z" /></Ico>
            </PagerArrows>
            <PageTab>Page 1</PageTab>
            <AddTab><Plus size={15} strokeWidth={3.4} color="#10221d" /></AddTab>
          </TabStrip>
        </Center>

        <DarkPane $w={180}>
          <PaneHead $right={7}>
            Build
            <PaneActions>
              <Dots />
              <Pair />
            </PaneActions>
          </PaneHead>
          <VizBox>
            {vizRows.map((n) => {
              if (n === "R") return <VizCell key={n} $size={16}>R</VizCell>;
              if (n === "Py") return <VizCell key={n} $size={17}>Py</VizCell>;
              if (n === "dots") return <VizCell key={n}><Dots c="#ddd" /></VizCell>;
              return <VizCell key={n}><G n={n} s={18} /></VizCell>;
            })}
          </VizBox>
          <Field title="Legend" top={10} value="Region" />
          <Field title="Values" top={8} value="Sum of Profit" />
          <Field title="Details" top={8} />
          <Field title="Tooltips" top={8} />
          <DarkScroll $r={0} $t={140} $h={331} />
        </DarkPane>

        <DarkPane $w={180}>
          <PaneHead $right={6}>
            Data
            <PaneActions>
              <Dots />
              <Pair />
            </PaneActions>
          </PaneHead>
          <DataSearch>
            <Search size={15} strokeWidth={1.3} color="#bbb" />
            Search
          </DataSearch>
          <FieldList>
            <FieldRows>
              {fields.map((f) => (
                <FieldRow key={f.n}>
                  <Expander>{f.x && <ChevronRight size={12} color="#ccc" />}</Expander>
                  <Check $on={f.on}>{f.on && "✓"}</Check>
                  <TypeIcon>
                    {f.t === "sum" && <Sigma size={16} strokeWidth={1.1} color="#ddd" />}
                    {f.t === "date" && <CalendarDays size={13} strokeWidth={1.2} color="#ddd" />}
                  </TypeIcon>
                  {f.n}
                  {f.dots && <RowDots><Dots s={12} /></RowDots>}
                </FieldRow>
              ))}
            </FieldRows>
          </FieldList>
          <DarkScroll $r={4} $t={178} $h={292} />
        </DarkPane>

        <RightRail>
          <RightButton $on><Database size={22} strokeWidth={1.1} /></RightButton>
          <RightButton $on>
            <Ico s={22}><path d="M2 10h5v8H2zM7 18V3h6v7" /><path d="M12 12c0-3 7-3 7 0v6c0 2-7 2-7 0z" stroke={O} /></Ico>
          </RightButton>
          <RightButton><Ico s={22}><path d="M2 8h5v10H2zM7 18V3h6v7" /><path d="M8 19l9-11 2 2-9 10z" fill={B} stroke="none" /></Ico></RightButton>
          <RightButton><Ico s={22}><path d="M3 2h12v16H3z" /><path d="M7 15v-5h3v5" /><circle cx="14" cy="14" r="4" stroke={B} fill="#1a1a1a" /></Ico></RightButton>
          <RightButton><Ico s={22}><path d="M5 7h13v3M5 7v12h6M7 13h4" /><path d="M10 11h9l-3 4v4l-3-1v-3z" /><path d="M2 6a5 5 0 0 1 9-2M11 7a5 5 0 0 1-9 1" stroke="#3cb371" strokeWidth="1.4" /></Ico></RightButton>
          <RightButton><Plus size={21} strokeWidth={1.1} /></RightButton>
          <RailGear><Settings size={21} strokeWidth={1.2} /></RailGear>
        </RightRail>
      </Main>

      <StatusBar>
        Page 1 of 1
        <ZoomBox>
          <Minus size={8} color="#ccc" />
          <ZoomTrack>
            <ZoomThumb $at={21} />
            <ZoomThumb $at={50} $tick />
          </ZoomTrack>
          <Plus size={10} color="#ddd" />
          <ZoomValue>50%</ZoomValue>
          <Ico s={16} stroke="#ccc"><path d="M2 4h16v12H2z" strokeWidth="1.3" /><path d="M5 9V7h3M12 7h3v2M15 11v2h-3M8 13H5v-2" /></Ico>
        </ZoomBox>
      </StatusBar>
    </Frame>
  </Screen>
);

export default App;
